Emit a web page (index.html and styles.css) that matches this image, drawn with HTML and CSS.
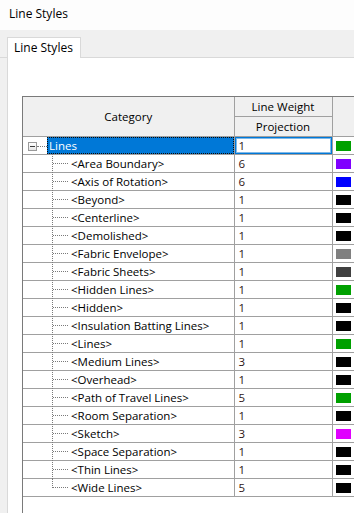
FILE: index.html
```html
<!DOCTYPE html>
<html lang="en">
<head>
    <meta charset="UTF-8">
    <meta name="viewport" content="width=device-width, initial-scale=1.0">
    <title>Line Styles</title>
    <link rel="stylesheet" href="styles.css">
</head>
<body>
    <div class="title">Line Styles</div>

    <div class="tabstrip">
        <div class="tab">Line Styles</div>
    </div>

    <div class="content">
        <div class="gutter"></div>
        <div class="panel">
            <div class="grid">
                <table class="styles">
                    <colgroup>
                        <col class="col-cat">
                        <col class="col-weight">
                        <col class="col-color">
                    </colgroup>
                    <thead>
                        <tr>
                            <th rowspan="2">Category</th>
                            <th class="sub">Line Weight</th>
                            <th rowspan="2" class="last"></th>
                        </tr>
                        <tr>
                            <th class="sub">Projection</th>
                        </tr>
                    </thead>
                    <tbody>
                        <tr class="selected">
                            <td>
                                <div class="node">
                                    <span class="toggle"></span>
                                    <span class="stub"></span>
                                    <span class="label">Lines</span>
                                </div>
                            </td>
                            <td class="weight">1</td>
                            <td class="color"><span class="swatch c-green"></span></td>
                        </tr>
                        <tr>
                            <td><div class="node"><span class="branch"></span><span class="name">&lt;Area Boundary&gt;</span></div></td>
                            <td class="weight">6</td>
                            <td class="color"><span class="swatch c-purple"></span></td>
                        </tr>
                        <tr>
                            <td><div class="node"><span class="branch"></span><span class="name">&lt;Axis of Rotation&gt;</span></div></td>
                            <td class="weight">6</td>
                            <td class="color"><span class="swatch c-blue"></span></td>
                        </tr>
                        <tr>
                            <td><div class="node"><span class="branch"></span><span class="name">&lt;Beyond&gt;</span></div></td>
                            <td class="weight">1</td>
                            <td class="color"><span class="swatch c-black"></span></td>
                        </tr>
                        <tr>
                            <td><div class="node"><span class="branch"></span><span class="name">&lt;Centerline&gt;</span></div></td>
                            <td class="weight">1</td>
                            <td class="color"><span class="swatch c-black"></span></td>
                        </tr>
                        <tr>
                            <td><div class="node"><span class="branch"></span><span class="name">&lt;Demolished&gt;</span></div></td>
                            <td class="weight">1</td>
                            <td class="color"><span class="swatch c-black"></span></td>
                        </tr>
                        <tr>
                            <td><div class="node"><span class="branch"></span><span class="name">&lt;Fabric Envelope&gt;</span></div></td>
                            <td class="weight">1</td>
                            <td class="color"><span class="swatch c-gray"></span></td>
                        </tr>
                        <tr>
                            <td><div class="node"><span class="branch"></span><span class="name">&lt;Fabric Sheets&gt;</span></div></td>
                            <td class="weight">1</td>
                            <td class="color"><span class="swatch c-dark"></span></td>
                        </tr>
                        <tr>
                            <td><div class="node"><span class="branch"></span><span class="name">&lt;Hidden Lines&gt;</span></div></td>
                            <td class="weight">1</td>
                            <td class="color"><span class="swatch c-green"></span></td>
                        </tr>
                        <tr>
                            <td><div class="node"><span class="branch"></span><span class="name">&lt;Hidden&gt;</span></div></td>
                            <td class="weight">1</td>
                            <td class="color"><span class="swatch c-black"></span></td>
                        </tr>
                        <tr>
                            <td><div class="node"><span class="branch"></span><span class="name">&lt;Insulation Batting Lines&gt;</span></div></td>
                            <td class="weight">1</td>
                            <td class="color"><span class="swatch c-black"></span></td>
                        </tr>
                        <tr>
                            <td><div class="node"><span class="branch"></span><span class="name">&lt;Lines&gt;</span></div></td>
                            <td class="weight">1</td>
                            <td class="color"><span class="swatch c-green"></span></td>
                        </tr>
                        <tr>
                            <td><div class="node"><span class="branch"></span><span class="name">&lt;Medium Lines&gt;</span></div></td>
                            <td class="weight">3</td>
                            <td class="color"><span class="swatch c-black"></span></td>
                        </tr>
                        <tr>
                            <td><div class="node"><span class="branch"></span><span class="name">&lt;Overhead&gt;</span></div></td>
                            <td class="weight">1</td>
                            <td class="color"><span class="swatch c-black"></span></td>
                        </tr>
                        <tr>
                            <td><div class="node"><span class="branch"></span><span class="name">&lt;Path of Travel Lines&gt;</span></div></td>
                            <td class="weight">5</td>
                            <td class="color"><span class="swatch c-green"></span></td>
                        </tr>
                        <tr>
                            <td><div class="node"><span class="branch"></span><span class="name">&lt;Room Separation&gt;</span></div></td>
                            <td class="weight">1</td>
                            <td class="color"><span class="swatch c-black"></span></td>
                        </tr>
                        <tr>
                            <td><div class="node"><span class="branch"></span><span class="name">&lt;Sketch&gt;</span></div></td>
                            <td class="weight">3</td>
                            <td class="color"><span class="swatch c-magenta"></span></td>
                        </tr>
                        <tr>
                            <td><div class="node"><span class="branch"></span><span class="name">&lt;Space Separation&gt;</span></div></td>
                            <td class="weight">1</td>
                            <td class="color"><span class="swatch c-black"></span></td>
                        </tr>
                        <tr>
                            <td><div class="node"><span class="branch"></span><span class="name">&lt;Thin Lines&gt;</span></div></td>
                            <td class="weight">1</td>
                            <td class="color"><span class="swatch c-black"></span></td>
                        </tr>
                        <tr>
                            <td><div class="node"><span class="branch end"></span><span class="name">&lt;Wide Lines&gt;</span></div></td>
                            <td class="weight">5</td>
                            <td class="color"><span class="swatch c-black"></span></td>
                        </tr>
                    </tbody>
                </table>
            </div>
        </div>
    </div>
</body>
</html>
```

FILE: styles.css
```css
html, body {
    margin: 0;
    padding: 0;
}

body {
    width: 354px;
    height: 513px;
    overflow: hidden;
    background: #ffffff;
    color: #000000;
    font-family: "Open Sans", "Noto Sans", sans-serif;
    font-size: 11.5px;
    display: flex;
    flex-direction: column;
}

.title {
    height: 30px;
    box-sizing: border-box;
    padding: 5px 0 0 9px;
    font-size: 12px;
    line-height: 18px;
    background: #fdfdfd;
}

.tabstrip {
    height: 28px;
    box-sizing: border-box;
    background: #f0f0f0;
    border-bottom: 1px solid #d9d9d9;
    display: flex;
    align-items: flex-end;
    padding-left: 7px;
}

.tab {
    height: 21px;
    box-sizing: border-box;
    margin-bottom: -1px;
    padding: 1px 7px 0 6px;
    background: #ffffff;
    border: 1px solid #d9d9d9;
    border-bottom: none;
    font-size: 12px;
    line-height: 18px;
}

.content {
    flex: 1;
    display: flex;
    min-height: 0;
}

.gutter {
    width: 7px;
    background: #f0f0f0;
}

.panel {
    flex: 1;
    background: #ffffff;
    border-left: 1px solid #d9d9d9;
    padding: 38px 0 0 14px;
    overflow: hidden;
    display: flex;
}

.grid {
    flex: 1;
    border-top: 1px solid #7a7a7a;
    border-left: 1px solid #7a7a7a;
    overflow: hidden;
}

.styles {
    border-collapse: collapse;
    table-layout: fixed;
    width: 360px;
}

.col-cat { width: 211px; }
.col-weight { width: 98px; }
.col-color { width: 51px; }

.styles th {
    background: #f0f0f0;
    font-weight: normal;
    height: 19px;
    padding: 0;
    border-right: 1px solid #a0a0a0;
    border-bottom: 1px solid #a0a0a0;
    line-height: 16px;
}

.styles th.sub {
    text-align: center;
}

.styles td {
    height: 17px;
    padding: 0;
    border-bottom: 1px solid #a0a0a0;
    border-right: 1px solid #a0a0a0;
    line-height: 17px;
    white-space: nowrap;
}

.node {
    display: flex;
    align-items: stretch;
    height: 17px;
}

/* selected root node */
.toggle {
    width: 9px;
    height: 9px;
    box-sizing: border-box;
    margin: 5px 0 0 5px;
    border: 1px solid #9a9a9a;
    background: linear-gradient(#ffffff, #e6e6e6);
    position: relative;
}

.toggle::after {
    content: "";
    position: absolute;
    left: 1px;
    top: 3px;
    width: 5px;
    height: 1px;
    background: #3c3c3c;
}

.stub {
    width: 10px;
    height: 0;
    margin-top: 9px;
    border-top: 1px dotted #7a7a7a;
}

.label {
    flex: 1;
    background: #0078d7;
    color: #ffffff;
    padding-left: 2px;
    outline: 1px dotted #0a0a0a;
    outline-offset: -1px;
}

.selected .weight {
    box-shadow: inset 0 0 0 1px #0078d7, inset 0 0 0 2px #7fb8e8;
}

/* child nodes */
.branch {
    width: 16px;
    margin-left: 29px;
    position: relative;
}

.branch::before {
    content: "";
    position: absolute;
    left: 0;
    top: -1px;
    bottom: -1px;
    border-left: 1px dotted #7a7a7a;
}

.branch.end::before {
    bottom: 8px;
}

.branch::after {
    content: "";
    position: absolute;
    left: 1px;
    top: 8px;
    width: 15px;
    border-top: 1px dotted #7a7a7a;
}

.name {
    padding-left: 3px;
}

.weight {
    padding-left: 4px !important;
    color: #2e1414;
}

.color {
    padding-left: 3px !important;
}

.swatch {
    display: inline-block;
    width: 15px;
    height: 10px;
    vertical-align: -1px;
}

.c-black { background: #000000; }
.c-green { background: #00a000; }
.c-purple { background: #8000ff; }
.c-blue { background: #0000ff; }
.c-gray { background: #808080; }
.c-dark { background: #404040; }
.c-magenta { background: #e000ff; }
```
